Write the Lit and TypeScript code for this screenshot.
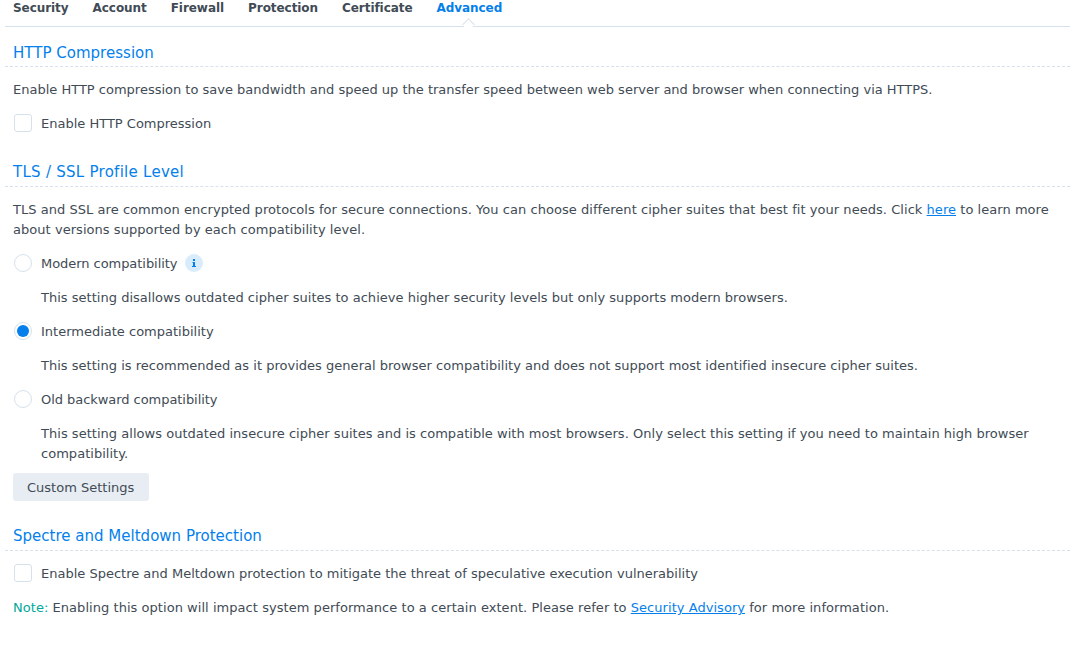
import { LitElement, html, css } from "lit";
import { customElement } from "lit/decorators.js";

@customElement("app-root")
export class AppRoot extends LitElement {
  static styles = css`
    :host { display: block; width: 1070px; height: 653px; background: #fff; overflow: hidden; font-family: "DejaVu Sans", sans-serif; font-size: 13px; line-height: 20px; color: #414b55; }
    * { box-sizing: border-box; }
    .tabs { display: flex; gap: 24px; height: 27px; margin-left: 5px; padding-left: 8px; padding-top: 1px; border-bottom: 1px solid #d7e1eb; position: relative; align-items: flex-start; font-size: 12px; letter-spacing: -0.06px; }
    .tab { font-weight: 700; line-height: 14px; height: 14px; }
    .tab.on { color: #057feb; position: relative; }
    .caret { position: absolute; left: 27px; top: 19px; width: 9px; height: 9px; transform: rotate(45deg); background: #fff; border-left: 1px solid #d7e1eb; border-top: 1px solid #d7e1eb; }
    .content { padding-left: 13px; }
    .head { margin-left: -8px; padding-left: 8px; height: 30px; color: #057feb; font-size: 15px; line-height: 29px; border-bottom: 1px dashed #d7e1eb; padding-top: 1px; }
    .h1 { margin-top: 10px; padding-top: 2px; letter-spacing: 0.02px; }
    .h2 { margin-top: 23px; letter-spacing: 0.27px; }
    .h3 { margin-top: 20px; letter-spacing: 0.01px; }
    p { margin: 0; padding-right: 10px; }
    .wide { letter-spacing: 0.045px; }
    .row { display: flex; align-items: flex-start; height: 20px; gap: 9px; margin-left: 1px; }
    .box { width: 18px; height: 18px; border: 1px solid #d7e1eb; border-radius: 3px; background: #fff; flex: none; }
    .radio { width: 18px; height: 18px; border: 1px solid #d7e1eb; border-radius: 50%; background: #fff; flex: none; display: flex; align-items: center; justify-content: center; }
    .radio.on::after { content: ""; width: 12px; height: 12px; border-radius: 50%; background: #057feb; }
    .narrow { letter-spacing: -0.05px; }
    .info { width: 18px; height: 18px; margin-left: -1px; border-radius: 50%; background: #d9ecfc; display: flex; align-items: center; justify-content: center; }
    .sub { padding-left: 28px; letter-spacing: 0.02px; }
    .sub.more { letter-spacing: 0.03px; }
    a { color: #057feb; text-decoration: underline; }
    .btn { display: block; width: 136px; height: 28px; line-height: 29px; padding-left: 14px; background: #e8edf3; border-radius: 3px; }
    .note { color: #00a89c; }
    .m13 { margin-top: 13px; }
    .m14 { margin-top: 14px; }
    .actions { margin-top: 9px; height: 28px; }
  `;
  render() {
    return html`
      <div class="tabs">
        <div class="tab">Security</div><div class="tab">Account</div><div class="tab">Firewall</div>
        <div class="tab">Protection</div><div class="tab">Certificate</div>
        <div class="tab on">Advanced<span class="caret"></span></div>
      </div>
      <div class="content">
        <div class="head h1">HTTP Compression</div>
        <p class="m13">Enable HTTP compression to save bandwidth and speed up the transfer speed between web server and browser when connecting via HTTPS.</p>
        <div class="row m14"><span class="box"></span>Enable HTTP Compression</div>
        <div class="head h2">TLS / SSL Profile Level</div>
        <p class="m13 wide">TLS and SSL are common encrypted protocols for secure connections. You can choose different cipher suites that best fit your needs. Click <a href="#">here</a> to learn more about versions supported by each compatibility level.</p>
        <div class="row m14 narrow"><span class="radio"></span>Modern compatibility
          <span class="info"><svg width="10" height="10" viewBox="0 0 10 10"><path fill="#057feb" d="M4 1h2v2H4zM3.5 4H6v4h1v1H3V8h1V5h-.5z"/></svg></span></div>
        <p class="sub m14">This setting disallows outdated cipher suites to achieve higher security levels but only supports modern browsers.</p>
        <div class="row m14"><span class="radio on"></span>Intermediate compatibility</div>
        <p class="sub m14">This setting is recommended as it provides general browser compatibility and does not support most identified insecure cipher suites.</p>
        <div class="row m14 narrow"><span class="radio"></span>Old backward compatibility</div>
        <p class="sub more m14">This setting allows outdated insecure cipher suites and is compatible with most browsers. Only select this setting if you need to maintain high browser compatibility.</p>
        <div class="actions"><span class="btn">Custom Settings</span></div>
        <div class="head h3">Spectre and Meltdown Protection</div>
        <div class="row m13"><span class="box"></span>Enable Spectre and Meltdown protection to mitigate the threat of speculative execution vulnerability</div>
        <p class="m14 wide"><span class="note">Note:</span> Enabling this option will impact system performance to a certain extent. Please refer to <a href="#">Security Advisory</a> for more information.</p>
      </div>
    `;
  }
}
